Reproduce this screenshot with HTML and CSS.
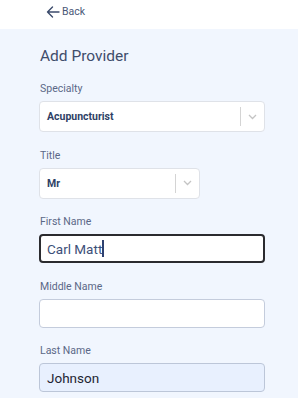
FILE: index.html
```html
<!DOCTYPE html>
<html>
<head>
<meta charset="utf-8">
<link rel="stylesheet" href="styles.css">
</head>
<body>
<header class="topbar">
  <a class="back">
    <svg class="back-icon" width="14" height="12" viewBox="0 0 14 12"><path d="M13 6H1.5M6.5 1L1.5 6l5 5" fill="none" stroke="#3b4a6b" stroke-width="1.4" stroke-linecap="round" stroke-linejoin="round"/></svg>
    <span>Back</span>
  </a>
</header>
<main class="content">
  <h1 class="title">Add Provider</h1>
  <div class="field">
    <div class="label">Specialty</div>
    <div class="select wide">
      <span class="select-value">Acupuncturist</span>
      <span class="indicator"><span class="sep"></span><svg class="chev" width="9" height="6" viewBox="0 0 9 6"><path d="M1 1l3.5 3.5L8 1" fill="none" stroke="#c4c4c4" stroke-width="1.3"/></svg></span>
    </div>
  </div>
  <div class="field">
    <div class="label">Title</div>
    <div class="select narrow">
      <span class="select-value">Mr</span>
      <span class="indicator"><span class="sep"></span><svg class="chev" width="9" height="6" viewBox="0 0 9 6"><path d="M1 1l3.5 3.5L8 1" fill="none" stroke="#c4c4c4" stroke-width="1.3"/></svg></span>
    </div>
  </div>
  <div class="field">
    <div class="label">First Name</div>
    <div class="input focused"><span class="val">Carl Matt</span><span class="caret"></span></div>
  </div>
  <div class="field">
    <div class="label">Middle Name</div>
    <div class="input"></div>
  </div>
  <div class="field">
    <div class="label">Last Name</div>
    <div class="input autofill"><span class="val dark">Johnson</span></div>
  </div>
</main>
</body>
</html>
```
FILE: styles.css
```css
* { box-sizing: border-box; }
html, body { margin: 0; padding: 0; }
body {
  background: #f1f6fe;
  font-family: Roboto, "Noto Sans", sans-serif;
  width: 298px;
  height: 398px;
  overflow: hidden;
}
.topbar {
  background: #ffffff;
  height: 29px;
  display: flex;
  align-items: center;
  padding-left: 46px;
  padding-bottom: 6px;
}
.back {
  display: flex;
  align-items: center;
  gap: 2px;
  color: #4a5878;
  font-size: 10.5px;
}
.back-icon { display: block; }
.content {
  padding: 0 33px 0 39px;
}
.title {
  margin: 17px 0 16px 1px;
  font-size: 15.5px;
  line-height: 20px;
  font-weight: 400;
  color: #3f4d6b;
}
.field { margin-bottom: 16.5px; }
.label {
  font-size: 10.5px;
  line-height: 13px;
  color: #5b6887;
  margin: 0 0 6px 1px;
}
.select {
  height: 31px;
  background: #fff;
  border: 1px solid #dfe2e8;
  border-radius: 4px;
  display: flex;
  align-items: center;
  padding-left: 7px;
}
.select.wide { width: 226px; }
.select.narrow { width: 161px; }
.select-value {
  flex: 1;
  font-size: 10.5px;
  font-weight: 700;
  color: #2e3f66;
}
.indicator {
  display: flex;
  align-items: center;
  height: 100%;
}
.sep {
  width: 1px;
  height: 19px;
  background: #d4d4d4;
}
.chev { display: block; margin: 0 7px 0 7px; }
.input {
  width: 226px;
  height: 29px;
  background: #fff;
  border: 1px solid #c4ccdc;
  border-radius: 4px;
  display: flex;
  align-items: center;
  padding-left: 7px;
}
.input.focused {
  border: 2px solid #2b2b2f;
  padding-left: 6px;
}
.input.autofill {
  background: #e8f0fe;
  border-color: #bcc6d8;
}
.val {
  font-size: 13.5px;
  color: #3d5079;
}
.val.dark { color: #1f2533; }
.caret {
  width: 1.5px;
  height: 17px;
  background: #2e4170;
  margin-left: 0;
}
```
